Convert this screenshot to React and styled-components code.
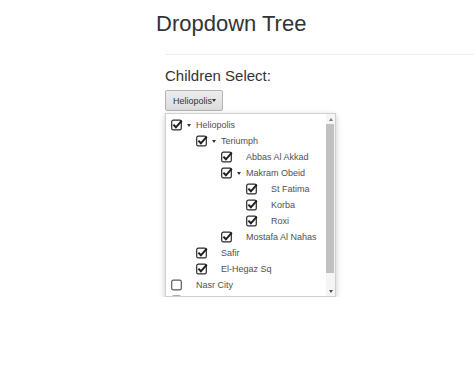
import React from "react";
import styled, { createGlobalStyle } from "styled-components";

const Global = createGlobalStyle`
  html, body { margin: 0; padding: 0; background: #fff; }
  body { font-family: "Liberation Sans", Arial, sans-serif; color: #333; }
`;

const Page = styled.div`
  padding: 11px 0 0 156px;
`;

const Title = styled.h1`
  margin: 0;
  font-size: 22px;
  font-weight: 400;
  line-height: 26px;
  color: #333;
`;

const Section = styled.div`
  padding-left: 9px;
`;

const Rule = styled.hr`
  margin: 17px 0 0 0;
  border: 0;
  border-top: 1px solid #eee;
`;

const Label = styled.div`
  margin-top: 12px;
  font-size: 15px;
  line-height: 18px;
  color: #333;
`;

const ToggleButton = styled.button`
  margin-top: 5px;
  display: flex;
  align-items: center;
  height: 21px;
  padding: 0 6px 0 7px;
  font-family: "Liberation Sans", Arial, sans-serif;
  font-size: 9px;
  color: #333;
  background: linear-gradient(#ececec, #dcdcdc);
  border: 1px solid #b3b3b3;
  border-radius: 2px;
`;

const Caret = styled.span`
  display: inline-block;
  width: 0;
  height: 0;
  border-left: 2.5px solid transparent;
  border-right: 2.5px solid transparent;
  border-top: 3px solid #333;
  margin-left: ${(p) => p.$ml || 0}px;
`;

const Panel = styled.div`
  margin-top: 2px;
  width: 171px;
  height: 184px;
  box-sizing: border-box;
  border: 1px solid #d0d0d0;
  box-shadow: 0 2px 6px rgba(0, 0, 0, 0.22);
  background: #fff;
  display: flex;
`;

const List = styled.div`
  flex: 1;
  overflow: hidden;
  padding: 3px 0 0 5px;
`;

const Row = styled.div`
  height: 16px;
  display: flex;
  align-items: center;
  padding-left: ${(p) => p.$level * 25}px;
  font-size: 9px;
  color: #505050;
  white-space: nowrap;
`;

const CaretSlot = styled.span`
  width: 13px;
  display: flex;
  align-items: center;
  padding-left: 4px;
  box-sizing: border-box;
  flex: none;
`;

const BoxSvg = styled.svg`
  flex: none;
  display: block;
`;

const ScrollCol = styled.div`
  width: 9px;
  display: flex;
  flex-direction: column;
  background: #f5f5f5;
`;

const ArrowBtn = styled.div`
  height: 10px;
  display: flex;
  align-items: center;
  justify-content: center;
`;

const ArrowUp = styled.span`
  width: 0;
  height: 0;
  border-left: 2px solid transparent;
  border-right: 2px solid transparent;
  border-bottom: 3px solid #7a7a7a;
`;

const ArrowDown = styled.span`
  width: 0;
  height: 0;
  border-left: 2px solid transparent;
  border-right: 2px solid transparent;
  border-top: 3px solid #505050;
`;

const Track = styled.div`
  flex: 1;
  display: flex;
  flex-direction: column;
`;

const Thumb = styled.div`
  height: 149px;
  margin: 0 1px 0 0;
  background: #c1c1c1;
`;

function Checkbox({ checked }) {
  return (
    <BoxSvg width="12" height="12" viewBox="0 0 12 12">
      <rect
        x="0.7"
        y="1.2"
        width="9.6"
        height="9.6"
        rx="1.6"
        fill="#fff"
        stroke={checked ? "#2a2a2a" : "#5a5a5a"}
        strokeWidth="1.2"
      />
      {checked && (
        <path
          d="M2.4 5.6 L4.9 8.3 L10.8 1.6"
          fill="none"
          stroke="#1e1e1e"
          strokeWidth="2"
          strokeLinecap="butt"
          strokeLinejoin="miter"
        />
      )}
    </BoxSvg>
  );
}

const tree = [
  {
    name: "Heliopolis",
    checked: true,
    children: [
      {
        name: "Teriumph",
        checked: true,
        children: [
          { name: "Abbas Al Akkad", checked: true },
          {
            name: "Makram Obeid",
            checked: true,
            children: [
              { name: "St Fatima", checked: true },
              { name: "Korba", checked: true },
              { name: "Roxi", checked: true },
            ],
          },
          { name: "Mostafa Al Nahas", checked: true },
        ],
      },
      { name: "Safir", checked: true },
      { name: "El-Hegaz Sq", checked: true },
    ],
  },
  { name: "Nasr City", checked: false },
  { name: "", checked: false },
];

function flatten(nodes, level, out) {
  nodes.forEach((n) => {
    out.push({ ...n, level });
    if (n.children) flatten(n.children, level + 1, out);
  });
  return out;
}

export default function App() {
  const rows = flatten(tree, 0, []);
  return (
    <>
      <Global />
      <Page>
        <Title>Dropdown Tree</Title>
        <Section>
          <Rule />
          <Label>Children Select:</Label>
          <ToggleButton>
            Heliopolis
            <Caret $ml={0} />
          </ToggleButton>
          <Panel>
            <List>
              {rows.map((r, i) => (
                <Row key={i} $level={r.level}>
                  <Checkbox checked={r.checked} />
                  <CaretSlot>{r.children && <Caret />}</CaretSlot>
                  {r.name}
                </Row>
              ))}
            </List>
            <ScrollCol>
              <ArrowBtn>
                <ArrowUp />
              </ArrowBtn>
              <Track>
                <Thumb />
              </Track>
              <ArrowBtn>
                <ArrowDown />
              </ArrowBtn>
            </ScrollCol>
          </Panel>
        </Section>
      </Page>
    </>
  );
}
